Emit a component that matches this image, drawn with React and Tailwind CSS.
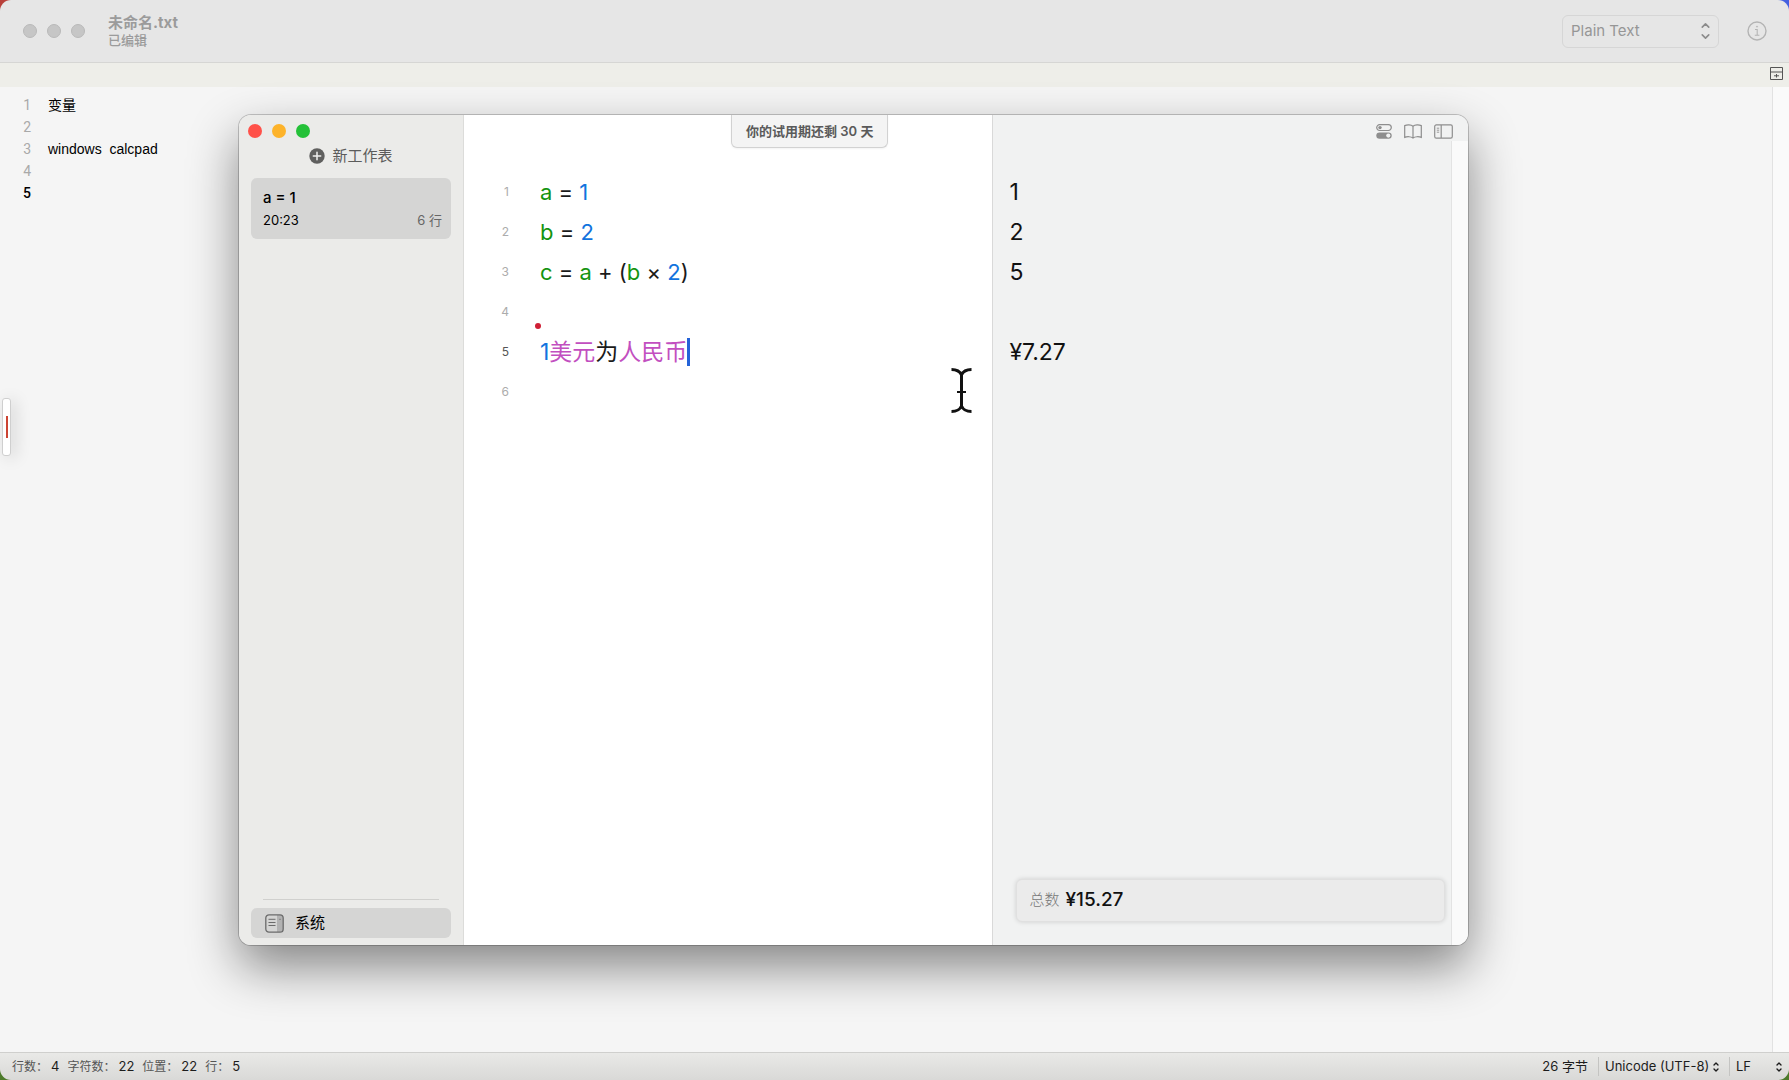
import { useState } from 'react';
import { FiChevronDown, FiChevronUp } from 'react-icons/fi';

const NUM = 'text-[#1273de]';
const VAR = 'text-[#14930f]';
const UNIT = 'text-[#c24fc0]';

const lines = [
  { code: [['a', VAR], [' = '], ['1', NUM]], result: '1' },
  { code: [['b', VAR], [' = '], ['2', NUM]], result: '2' },
  {
    code: [['c', VAR], [' = '], ['a', VAR], [' + ('], ['b', VAR], [' × '], ['2', NUM], [')']],
    result: '5',
  },
  { code: [], result: '' },
  { code: [['1', NUM], ['美元', UNIT], ['为'], ['人民币', UNIT]], result: '¥7.27', active: true },
  { code: [], result: '' },
];

const stats = [
  ['行数', '4'],
  ['字符数', '22'],
  ['位置', '22'],
  ['行', '5'],
];

function UpDown({ className }) {
  return (
    <span className={`pointer-events-none flex flex-col items-center ${className}`}>
      <FiChevronUp className="-mb-px" />
      <FiChevronDown className="-mt-px" />
    </span>
  );
}

function StatusSelect({ label, options, className }) {
  return (
    <label className={`flex items-center justify-between border-l border-[#c4c4c2] pl-[6px] ${className}`}>
      <select aria-label={label} className="appearance-none bg-transparent outline-none">
        {options.map((o) => (
          <option key={o}>{o}</option>
        ))}
      </select>
      <UpDown className="text-[8px] [&_svg]:stroke-[4px]" />
    </label>
  );
}

function TitleBar() {
  return (
    <header className="flex h-[63px] shrink-0 items-center border-b border-[#d6d6d4] bg-[#e6e6e6] pr-[22px] pl-[23px] text-[#9b9b9b]">
      <div className="flex gap-[10px]">
        {['关闭', '最小化', '缩放'].map((name) => (
          <button
            key={name}
            aria-label={name}
            className="size-[14px] rounded-full border border-[#b9b9b9] bg-[#c6c6c6]"
          />
        ))}
      </div>
      <div className="ml-[23px] flex-1">
        <h1 className="text-[15px] leading-[18px] font-bold">未命名.txt</h1>
        <p className="text-[13px] leading-[17px] font-medium">已编辑</p>
      </div>
      <label className="relative mr-7 flex h-[33px] w-[157px] items-center rounded-[6px] border border-[#d6d6d6]">
        <select
          aria-label="语法"
          className="h-full w-full appearance-none bg-transparent pl-2 text-[15px] text-[#969696] outline-none"
        >
          <option>Plain Text</option>
          <option>Markdown</option>
        </select>
        <UpDown className="absolute right-[6px] text-[13px] text-[#8c8c8c] [&_svg]:stroke-[3px]" />
      </label>
      <button aria-label="信息">
        <svg viewBox="0 0 20 20" className="size-5" fill="none" stroke="#b4b4b4" strokeWidth="1.4">
          <circle cx="10" cy="10" r="9" />
          <path d="M8 8.5h2.2v5.5M7.8 14.2h4.6" strokeWidth="1.1" />
          <circle cx="10" cy="5.6" r="0.6" fill="#b4b4b4" strokeWidth="0.6" />
        </svg>
      </button>
    </header>
  );
}

function TextEditor() {
  const [text, setText] = useState('变量\n\nwindows  calcpad\n\n');
  const rows = text.split('\n').length;

  return (
    <main className="flex min-h-0 flex-1 bg-[#f5f5f5]">
      <ol className="w-[31px] pt-[7px] text-right font-['Roboto'] text-[14px] leading-[22px] text-[#a9a9a9]">
        {Array.from({ length: rows }, (_, i) => (
          <li key={i} className={i === rows - 1 ? 'font-medium text-black' : ''}>
            {i + 1}
          </li>
        ))}
      </ol>
      <textarea
        aria-label="文稿"
        value={text}
        onChange={(e) => setText(e.target.value)}
        className="flex-1 resize-none bg-transparent pt-[7px] pl-[17px] font-['Liberation_Sans','Noto_Sans_CJK_SC',sans-serif] text-[14px] leading-[22px] text-black outline-none"
      />
      <div className="w-[17px] border-l border-[#e2e2e2] bg-[#fafafa]" />
    </main>
  );
}

function StatusBar() {
  return (
    <footer className="flex h-[28px] shrink-0 items-center border-t border-[#cfcfcd] bg-linear-to-b from-[#e9e9e7] to-[#d9d9d7] pr-[6px] pl-3 text-[13px] text-[#1c1c1c]">
      <dl className="flex flex-1 gap-2">
        {stats.map(([label, value]) => (
          <div key={label} className="flex items-center gap-[3px]">
            <dt className="text-[12px] text-[#555]">{label}：</dt>
            <dd>{value}</dd>
          </div>
        ))}
      </dl>
      <span className="mr-[10px]">26 字节</span>
      <StatusSelect label="编码" options={['Unicode (UTF-8)', 'GB 18030']} className="w-[131px] pr-[9px]" />
      <StatusSelect label="换行符" options={['LF', 'CRLF']} className="w-[54px]" />
    </footer>
  );
}

function Sidebar() {
  return (
    <aside className="flex flex-col border-r border-[#dcdcda] bg-[#ebebe9] px-3 pb-[7px]">
      <div className="-ml-[3px] flex gap-[10px] pt-[9px]">
        <button aria-label="关闭窗口" className="size-[14px] rounded-full bg-[#ff5149]" />
        <button aria-label="最小化窗口" className="size-[14px] rounded-full bg-[#fdb32a]" />
        <button aria-label="缩放窗口" className="size-[14px] rounded-full bg-[#24c138]" />
      </div>
      <button className="mt-[6px] flex h-6 items-center justify-center gap-[7px] text-[15px] text-[#5c5c5b]">
        <svg viewBox="0 0 16 16" className="size-4">
          <circle cx="8" cy="8" r="7.7" fill="#5f5f5e" />
          <path d="M8 4.3v7.4M4.3 8h7.4" stroke="#efefee" strokeWidth="1.5" strokeLinecap="round" />
        </svg>
        新工作表
      </button>
      <button className="mt-[10px] h-[61px] rounded-[6px] bg-[#d5d5d4] pr-[9px] pl-3 text-left text-black">
        <span className="block text-[15px] leading-[22px] font-medium">a = 1</span>
        <span className="flex justify-between text-[13px] leading-[22px]">
          20:23 <span className="text-[#666]">6 行</span>
        </span>
      </button>
      <hr className="mx-3 mt-auto mb-2 border-[#d0d0ce]" />
      <button className="flex h-[30px] items-center gap-[11px] rounded-[6px] bg-[#d5d5d4] px-[14px] text-[15px] text-black">
        <svg viewBox="0 0 19 19" className="size-[19px]" fill="none">
          <path d="M12 1h3.5A2.5 2.5 0 0 1 18 3.5v12a2.5 2.5 0 0 1-2.5 2.5H12z" fill="#b2b2b2" />
          <rect x="0.8" y="0.8" width="17.4" height="17.4" rx="3.2" stroke="#6b6b6b" strokeWidth="1.3" />
          <path d="M3.5 5.3h7M3.5 8.5h7M3.5 11.5h7" stroke="#6b6b6b" strokeWidth="1" />
          <path d="M14.2 5.3h1.6" stroke="#7a7a7a" strokeWidth="1" />
        </svg>
        系统
      </button>
    </aside>
  );
}

function Worksheet() {
  return (
    <section className="relative flex flex-col bg-white">
      <div className="mr-[104px] flex h-[33px] items-center self-end rounded-b-[6px] border border-t-0 border-[#d2d2d2] bg-[#f4f4f4] px-[14px] pt-px text-[13px] font-semibold text-[#5a5a5a] shadow-xs">
        你的试用期还剩 30 天
      </div>
      <ol className="pt-6 text-[#1a1a1a]">
        {lines.map((line, i) => (
          <li key={i} className="flex h-10 items-center">
            <span className={`w-[45px] text-right text-[12px] ${line.active ? 'text-[#555]' : 'text-[#acacac]'}`}>
              {i + 1}
            </span>
            <code
              className={`ml-[31px] flex items-center whitespace-pre font-[inherit] ${line.active ? 'text-[23px]' : 'text-[22px]'}`}
            >
              {line.code.map(([t, color = ''], j) => (
                <span key={j} className={color}>{t}</span>
              ))}
              {line.active && <span className="h-7 w-[3px] bg-[#2563d8]" />}
            </code>
          </li>
        ))}
      </ol>
      <span className="absolute top-[208px] left-[71px] size-[6px] rounded-full bg-[#cf1f35]" />
      <svg viewBox="0 0 21 45" className="absolute top-[253px] right-[20px] h-[45px] w-[21px]" fill="none" stroke="#111" strokeWidth="3">
        <path d="M0.5 1.5C6 1.5 9 3.5 10.5 7 12 3.5 15 1.5 20.5 1.5M0.5 43.5C6 43.5 9 41.5 10.5 38 12 41.5 15 43.5 20.5 43.5M10.5 6v33" />
        <path d="M6 24h9" strokeWidth="2" />
      </svg>
    </section>
  );
}

function Results() {
  return (
    <section className="flex flex-col border-l border-[#d9d9d9] bg-[#f1f2f2]">
      <div className="flex h-[26px] items-end justify-end gap-3 pr-[15px] pb-[2px] text-[#8e8e8e]">
        <button aria-label="选项">
          <svg viewBox="0 0 16 15" className="h-[15px] w-4" fill="none" stroke="currentColor">
            <rect x="0.7" y="0.7" width="14.6" height="5.8" rx="2.9" strokeWidth="1.2" />
            <circle cx="4" cy="3.6" r="1.7" fill="currentColor" stroke="none" />
            <rect x="0.3" y="8.4" width="15.4" height="6.4" rx="3.2" fill="currentColor" stroke="none" />
            <circle cx="12.3" cy="11.6" r="2.1" fill="#f1f2f2" stroke="none" />
          </svg>
        </button>
        <button aria-label="手册">
          <svg viewBox="0 0 18 15" className="h-[15px] w-[18px]" fill="none" stroke="currentColor" strokeWidth="1.2">
            <path d="M9 2.2C7 0.5 3 0.5 0.7 1.6v11.8C3 12.4 7 12.400 9 14c2-1.6 6-1.6 8.300-0.6V1.6C15 0.5 11 0.5 9 2.2zM9 2.2V14" />
          </svg>
        </button>
        <button aria-label="边栏">
          <svg viewBox="0 0 19 15" className="h-[15px] w-[19px]" fill="none" stroke="currentColor" strokeWidth="1.2">
            <rect x="0.7" y="0.9" width="17.6" height="13.2" rx="1.6" />
            <path d="M7.2 1v13" />
            <path d="M2.8 4.2h2.4M2.8 6.2h2.4M2.8 8.2h2.4" strokeWidth="0.9" />
          </svg>
        </button>
      </div>
      <div className="flex flex-1">
        <div className="flex flex-1 flex-col">
          <ol className="pt-[31px] pl-4 text-[23px] text-[#111]">
            {lines.map((line, i) => (
              <li key={i} className="flex h-10 items-center">{line.result}</li>
            ))}
          </ol>
          <div className="mt-auto mr-[6px] mb-[23px] ml-[23px] flex h-[43px] items-center gap-[6px] rounded-[6px] border border-[#e0e0e0] bg-[#ebebeb] px-3 shadow-[0_0_5px_rgba(0,0,0,0.14)]">
            <span className="text-[15px] font-light text-[#777]">总数</span>
            <output className="text-[19px] font-medium text-[#111]">¥15.27</output>
          </div>
        </div>
        <div className="w-[17px] border-l border-[#e3e3e3] bg-[#fafafa]" />
      </div>
    </section>
  );
}

export default function App() {
  return (
    <div className="relative h-screen bg-[linear-gradient(to_top,#4c7a2a_30px,transparent_30px),linear-gradient(to_right,#b9403a_50%,#4460e0_50%)] font-['Inter','Noto_Sans_CJK_SC',sans-serif]">
      <div className="flex h-full flex-col overflow-hidden rounded-[11px]">
        <TitleBar />
        <div className="flex h-6 shrink-0 items-center justify-end bg-[#eeeee9] pr-[6px] pb-[3px]">
          <button aria-label="拆分编辑器">
            <svg viewBox="0 0 13 13" className="size-[13px]" fill="none" stroke="#555" strokeWidth="1">
              <path d="M0.5 0.5h12v12h-12zM0.5 5h12" />
              <path d="M4 8.8h5M6.5 7v3.5" />
            </svg>
          </button>
        </div>
        <TextEditor />
        <StatusBar />
      </div>

      <div className="absolute top-[398px] left-[2px] flex h-[58px] w-[9px] items-center justify-center rounded-[3px] border border-[#cfcfcf] bg-white shadow-[4px_2px_16px_rgba(0,0,0,0.15)]">
        <span className="h-[22px] w-[2px] bg-[#cc4433]" />
      </div>

      <div className="absolute top-[115px] right-[321px] bottom-[135px] left-[239px] grid grid-cols-[225px_10fr_9fr] overflow-hidden rounded-[12px] shadow-[0_0_0_1px_rgba(0,0,0,0.2),0_22px_50px_rgba(0,0,0,0.46)]">
        <Sidebar />
        <Worksheet />
        <Results />
      </div>
    </div>
  );
}
